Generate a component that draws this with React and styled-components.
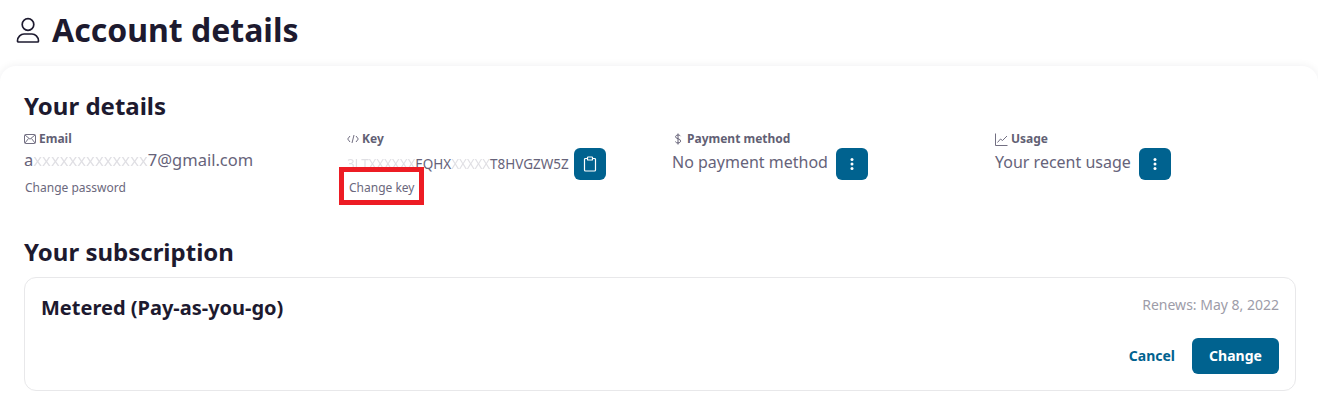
import React from "react";
import styled, { createGlobalStyle } from "styled-components";

const GlobalStyle = createGlobalStyle`
  html, body {
    margin: 0;
    padding: 0;
    background: #fff;
    font-family: "Noto Sans", sans-serif;
    color: #1d1a2f;
    overflow: hidden;
  }
`;

const Page = styled.div`
  width: 1318px;
  height: 403px;
  overflow: hidden;
`;
const Header = styled.header`
  display: flex;
  align-items: center;
  gap: 11px;
  height: 66px;
  padding: 0 0 6px 15px;
  box-sizing: border-box;
`;
const Title = styled.h1`
  margin: 0;
  font-size: 32px;
  line-height: 44px;
  font-weight: 700;
  color: #1d1a2f;
`;
const Card = styled.main`
  border-radius: 16px 16px 0 0;
  box-shadow: 0 0 8px rgba(29, 26, 47, 0.07);
  padding: 23px 22px 0 24px;
  height: 337px;
  box-sizing: border-box;
`;
const SectionTitle = styled.h2`
  margin: 0;
  font-size: 24px;
  line-height: 33px;
  font-weight: 700;
  color: #1d1a2f;
`;
const DetailsGrid = styled.div`
  display: grid;
  grid-template-columns: 323px 325px 323px 1fr;
  margin-top: 9px;
  height: 104px;
`;
const Column = styled.div`
  display: flex;
  flex-direction: column;
  align-items: flex-start;
`;
const Label = styled.div`
  display: flex;
  align-items: center;
  gap: 3px;
  height: 16px;
  font-size: 12px;
  line-height: 16px;
  font-weight: 700;
  color: #625f74;
`;
const Value = styled.div`
  font-size: 16px;
  line-height: 22px;
  color: #66637a;
  white-space: nowrap;
  margin-top: -5px;
`;
const EmailValue = styled(Value)`
  font-size: 16.5px;
  margin-top: 2px;
`;
const ValueRow = styled.div`
  display: flex;
  align-items: center;
  gap: ${(p) => p.$gap}px;
  height: 32px;
  margin-top: 1px;
`;
const KeyText = styled.span`
  font-size: 13.5px;
  line-height: 20px;
  color: #66637a;
  white-space: nowrap;
  margin-top: -1px;
`;
const Smudge = styled.span`
  opacity: 0.2;
  filter: blur(0.7px);
  letter-spacing: ${(p) => p.$spacing || 0}px;
`;
const SmallLink = styled.a`
  font-size: 12px;
  line-height: 16px;
  color: #6b687d;
  margin-left: ${(p) => p.$left}px;
  margin-top: ${(p) => p.$top || 0}px;
  display: block;
`;
const KeyLinkWrap = styled.div`
  position: relative;
`;
const RedBox = styled.div`
  position: absolute;
  left: -8px;
  top: -13px;
  width: 85px;
  height: 38px;
  box-sizing: border-box;
  border: 5px solid #ed1c24;
`;
const IconButton = styled.button`
  width: 32px;
  height: 32px;
  padding: 0;
  border: none;
  border-radius: 6px;
  background: #00628f;
  color: #fff;
  display: flex;
  align-items: center;
  justify-content: center;
`;
const SubscriptionBox = styled.section`
  margin-top: 9px;
  height: 114px;
  box-sizing: border-box;
  border: 1px solid #e8e8ea;
  border-radius: 12px;
  padding: 16px;
  display: flex;
  flex-direction: column;
  justify-content: space-between;
`;
const BoxTop = styled.div`
  display: flex;
  justify-content: space-between;
  align-items: flex-start;
`;
const PlanName = styled.div`
  font-size: 20px;
  line-height: 28px;
  font-weight: 700;
  color: #1d1a2f;
`;
const Renews = styled.div`
  font-size: 14px;
  line-height: 22px;
  color: #9d9ca8;
`;
const Actions = styled.div`
  display: flex;
  justify-content: flex-end;
  align-items: center;
  gap: 17px;
`;
const TextButton = styled.button`
  border: none;
  background: none;
  padding: 0;
  font: 700 14px/20px "Noto Sans", sans-serif;
  color: #00628f;
`;
const PrimaryButton = styled.button`
  width: 87px;
  height: 36px;
  border: none;
  border-radius: 6px;
  background: #00628f;
  color: #fff;
  font: 700 14px/20px "Noto Sans", sans-serif;
`;

const PersonIcon = () => (
  <svg width="26" height="28" viewBox="0 0 26 28" fill="none" stroke="#1d1a2f" strokeWidth="1.7">
    <circle cx="13" cy="8.500" r="5.800" />
    <path d="M2.500 25c0-4.500 3.500-7 6.500-7h8c3 0 6.500 2.500 6.500 7 0 .6-.4 1-1 1h-19c-.6 0-1-.4-1-1z" />
  </svg>
);
const MailIcon = () => (
  <svg width="12" height="10" viewBox="0 0 12 10" fill="none" stroke="#625f74" strokeWidth="0.9">
    <rect x="0.5" y="0.5" width="11" height="9" rx="1" />
    <path d="M1 1l5 4.200L11 1M1 9l3.500-4.500M11 9L7.500 4.500" />
  </svg>
);
const CodeIcon = () => (
  <svg width="12" height="10" viewBox="0 0 12 10" fill="none" stroke="#625f74" strokeWidth="0.9">
    <path d="M3 2L.7 5 3 8M9 2l2.300 3L9 8M7 1L5 9" />
  </svg>
);
const DollarIcon = () => (
  <svg width="12" height="12" viewBox="0 0 12 12" fill="none" stroke="#625f74" strokeWidth="1">
    <path d="M8.500 3.200C8 2.300 7 2 6 2 4.600 2 3.600 2.700 3.600 3.800 3.600 6.300 8.600 5.200 8.600 8 8.600 9.200 7.400 10 6 10 4.800 10 3.800 9.500 3.300 8.600M6 .5v11" />
  </svg>
);
const ChartIcon = () => (
  <svg width="13" height="13" viewBox="0 0 13 13" fill="none" stroke="#625f74" strokeWidth="0.9">
    <path d="M.5 .5v12h12" />
    <path d="M2.500 9.500l3-3.500 2 1.500L12 3" />
  </svg>
);
const ClipboardIcon = () => (
  <svg width="16" height="16" viewBox="0 0 16 16" fill="none" stroke="#fff" strokeWidth="1.2">
    <path d="M5.500 2.500H3.500a1 1 0 0 0-1 1v10.500a1 1 0 0 0 1 1h9a1 1 0 0 0 1-1V3.500a1 1 0 0 0-1-1h-2" />
    <rect x="5.500" y="1" width="5" height="3" rx="0.6" />
  </svg>
);
const DotsIcon = () => (
  <svg width="4" height="14" viewBox="0 0 4 14" fill="#fff">
    <circle cx="2" cy="2.500" r="1.500" />
    <circle cx="2" cy="7" r="1.500" />
    <circle cx="2" cy="11.500" r="1.500" />
  </svg>
);

export default function App() {
  return (
    <Page>
      <GlobalStyle />
      <Header>
        <PersonIcon />
        <Title>Account details</Title>
      </Header>
      <Card>
        <SectionTitle>Your details</SectionTitle>
        <DetailsGrid>
          <Column>
            <Label>
              <MailIcon />
              Email
            </Label>
            <EmailValue>
              a<Smudge $spacing={0.08}>xxxxxxxxxxxxx</Smudge>7@gmail.com
            </EmailValue>
            <SmallLink $left={1} $top={9}>Change password</SmallLink>
          </Column>
          <Column>
            <Label>
              <CodeIcon />
              Key
            </Label>
            <ValueRow $gap={5}>
              <KeyText>
                <Smudge $spacing={-0.15}>3LTXXXXXX</Smudge>EQHX<Smudge $spacing={-0.15}>XXXXX</Smudge>T8HVGZW5Z
              </KeyText>
              <IconButton>
                <ClipboardIcon />
              </IconButton>
            </ValueRow>
            <KeyLinkWrap>
              <SmallLink $left={2}>Change key</SmallLink>
              <RedBox />
            </KeyLinkWrap>
          </Column>
          <Column>
            <Label>
              <DollarIcon />
              Payment method
            </Label>
            <ValueRow $gap={8}>
              <Value>No payment method</Value>
              <IconButton>
                <DotsIcon />
              </IconButton>
            </ValueRow>
          </Column>
          <Column>
            <Label>
              <ChartIcon />
              Usage
            </Label>
            <ValueRow $gap={8}>
              <Value>Your recent usage</Value>
              <IconButton>
                <DotsIcon />
              </IconButton>
            </ValueRow>
          </Column>
        </DetailsGrid>
        <SectionTitle>Your subscription</SectionTitle>
        <SubscriptionBox>
          <BoxTop>
            <PlanName>Metered (Pay-as-you-go)</PlanName>
            <Renews>Renews: May 8, 2022</Renews>
          </BoxTop>
          <Actions>
            <TextButton>Cancel</TextButton>
            <PrimaryButton>Change</PrimaryButton>
          </Actions>
        </SubscriptionBox>
      </Card>
    </Page>
  );
}
